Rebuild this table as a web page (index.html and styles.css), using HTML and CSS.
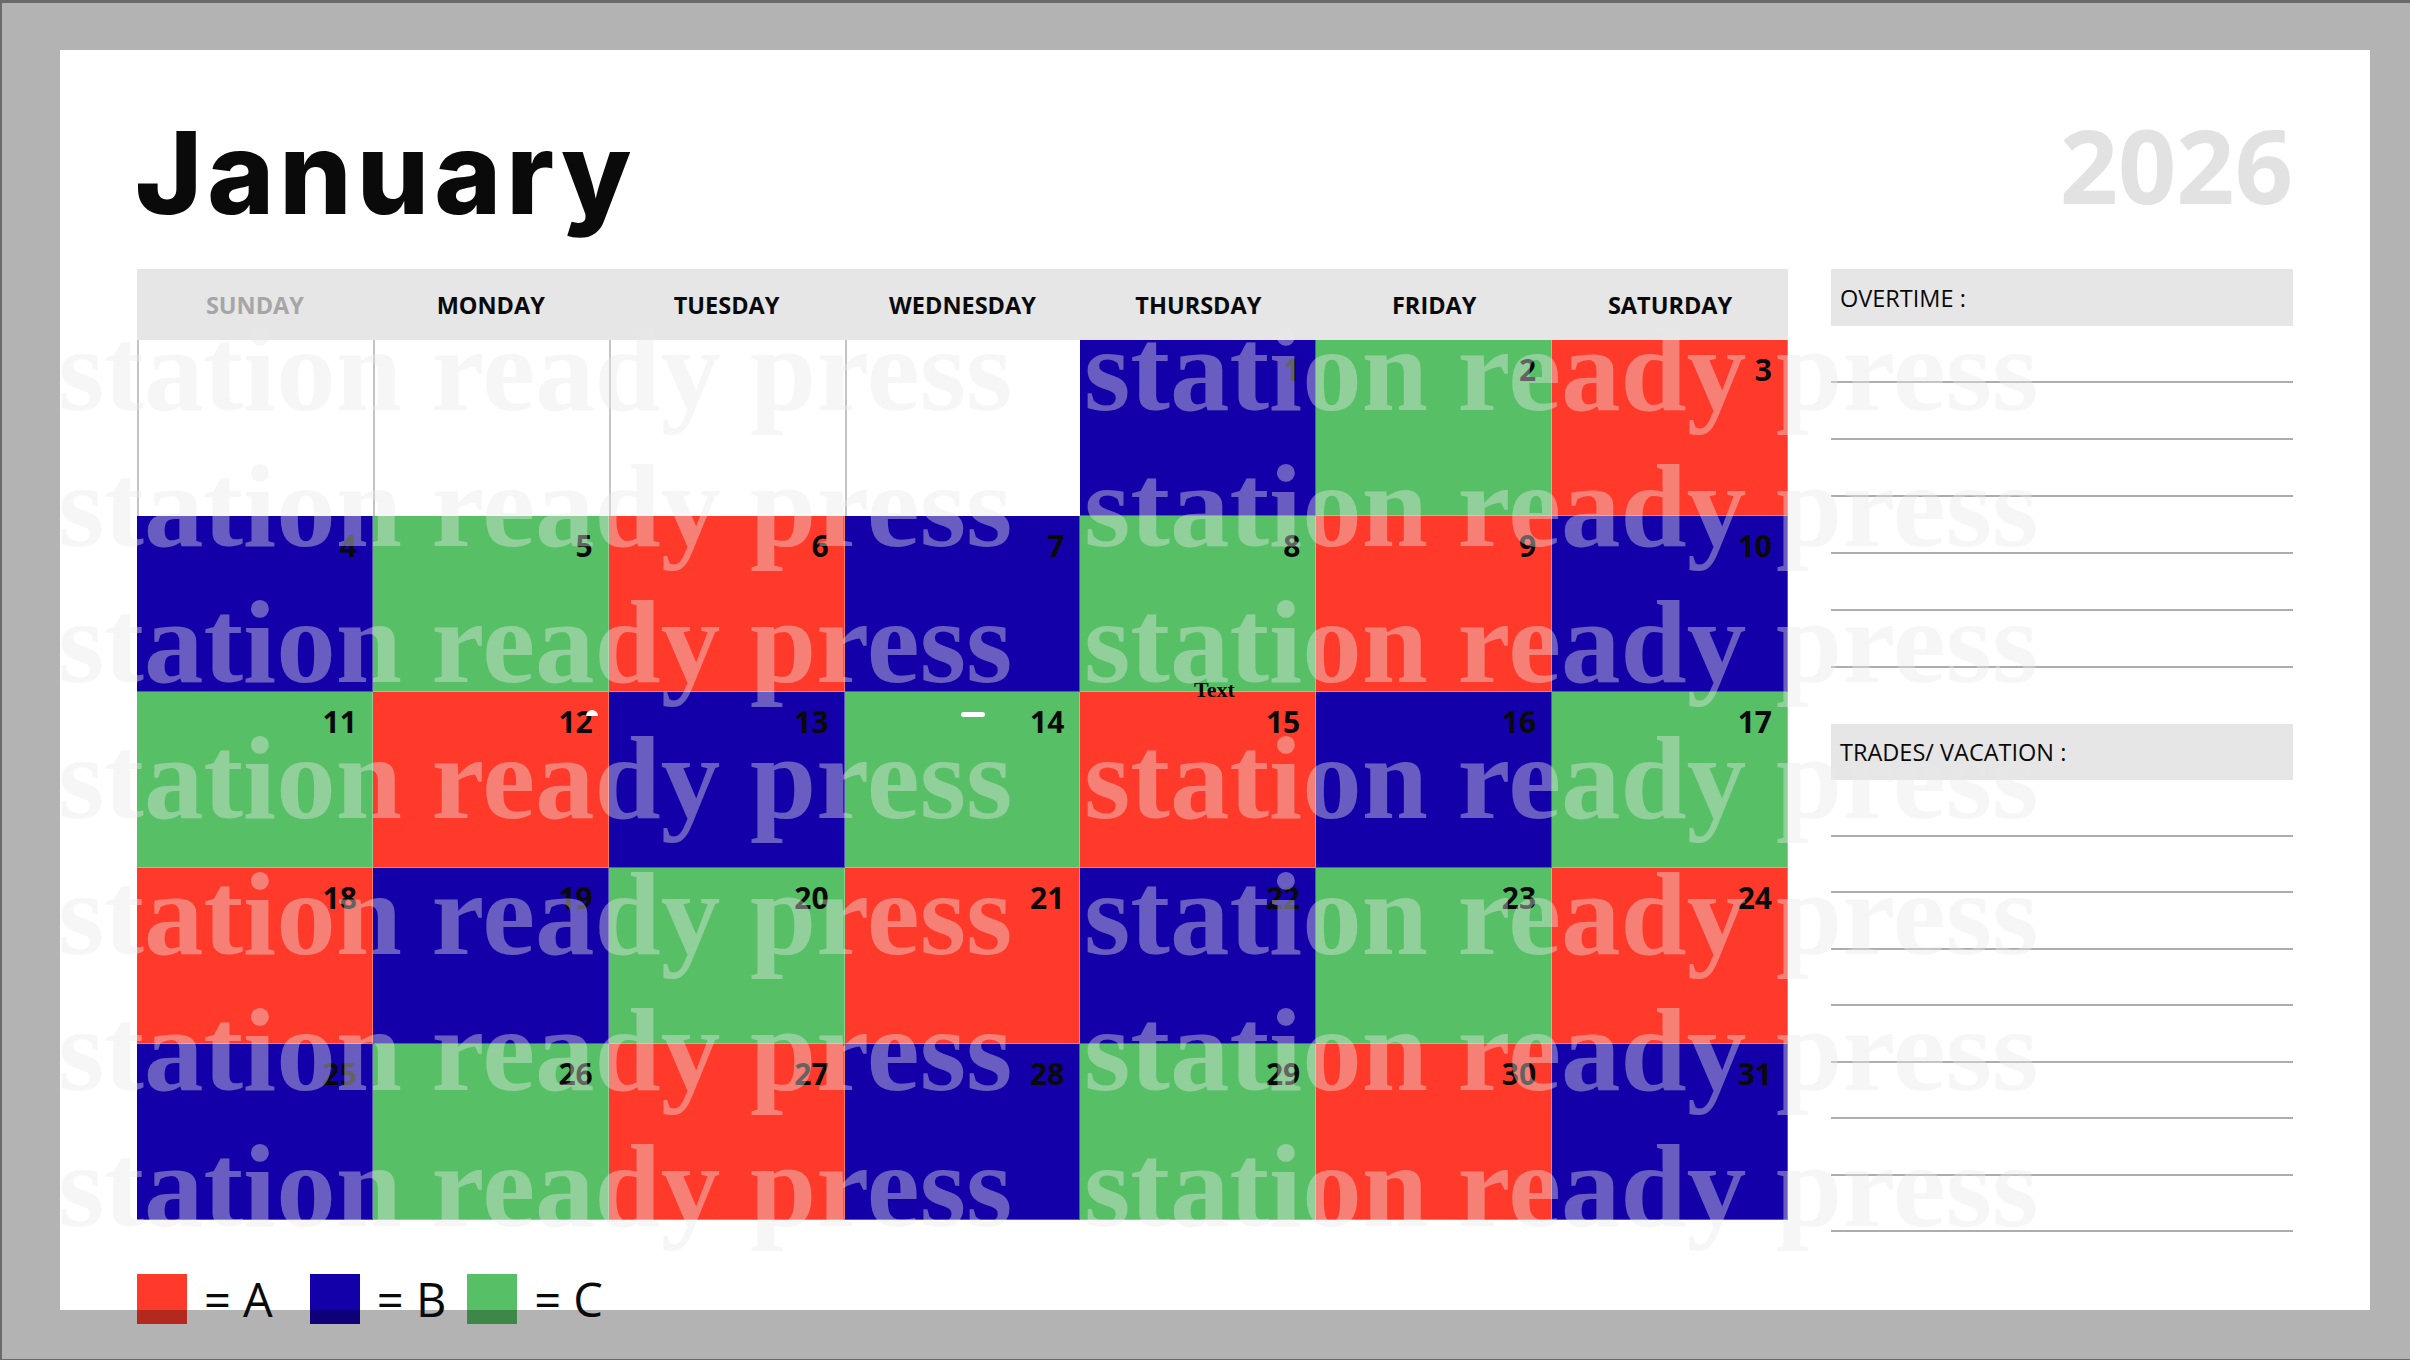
FILE: index.html
```html
<!DOCTYPE html>
<html lang="en">
<head>
<meta charset="utf-8">
<title>January 2026</title>
<link rel="stylesheet" href="styles.css">
</head>
<body>
<div class="page">
  <div class="card">
    <header class="title-row">
      <h1 class="month">January</h1>
      <div class="year">2026</div>
    </header>
    <div class="main">
      <section class="calendar">
        <div class="dow-row">
          <div class="dow sun">SUNDAY</div>
          <div class="dow">MONDAY</div>
          <div class="dow">TUESDAY</div>
          <div class="dow">WEDNESDAY</div>
          <div class="dow">THURSDAY</div>
          <div class="dow">FRIDAY</div>
          <div class="dow">SATURDAY</div>
        </div>
        <div class="days">
          <div class="day empty"></div>
          <div class="day empty"></div>
          <div class="day empty"></div>
          <div class="day empty"></div>
          <div class="day b">1</div>
          <div class="day c">2</div>
          <div class="day a">3</div>
          <div class="day b">4</div>
          <div class="day c">5</div>
          <div class="day a">6</div>
          <div class="day b">7</div>
          <div class="day c">8</div>
          <div class="day a">9</div>
          <div class="day b">10</div>
          <div class="day c">11</div>
          <div class="day a">12</div>
          <div class="day b">13</div>
          <div class="day c">14</div>
          <div class="day a">15</div>
          <div class="day b">16</div>
          <div class="day c">17</div>
          <div class="day a">18</div>
          <div class="day b">19</div>
          <div class="day c">20</div>
          <div class="day a">21</div>
          <div class="day b">22</div>
          <div class="day c">23</div>
          <div class="day a">24</div>
          <div class="day b">25</div>
          <div class="day c">26</div>
          <div class="day a">27</div>
          <div class="day b">28</div>
          <div class="day c">29</div>
          <div class="day a">30</div>
          <div class="day b">31</div>
        </div>
      </section>
      <aside class="notes">
        <div class="note-head">OVERTIME :</div>
        <div class="line"></div>
        <div class="line"></div>
        <div class="line"></div>
        <div class="line"></div>
        <div class="line"></div>
        <div class="line"></div>
        <div class="note-head trades">TRADES/ VACATION :</div>
        <div class="line tight"></div>
        <div class="line tight"></div>
        <div class="line tight"></div>
        <div class="line tight"></div>
        <div class="line tight"></div>
        <div class="line tight"></div>
        <div class="line tight"></div>
        <div class="line tight"></div>
      </aside>
    </div>
    <div class="legend">
      <span class="swatch sw-a"></span><span class="legend-label">= A</span>
      <span class="swatch sw-b"></span><span class="legend-label lbl-b">= B</span>
      <span class="swatch sw-c"></span><span class="legend-label">= C</span>
    </div>
  </div>

  <div class="watermark" aria-hidden="true">
    <div class="wm-row"><span>station ready press</span><span>station ready press</span></div>
    <div class="wm-row"><span>station ready press</span><span>station ready press</span></div>
    <div class="wm-row"><span>station ready press</span><span>station ready press</span></div>
    <div class="wm-row"><span>station ready press</span><span>station ready press</span></div>
    <div class="wm-row"><span>station ready press</span><span>station ready press</span></div>
    <div class="wm-row"><span>station ready press</span><span>station ready press</span></div>
    <div class="wm-row"><span>station ready press</span><span>station ready press</span></div>
  </div>
  <span class="stray-text">Text</span>
  <span class="stray-dash"></span>
  <span class="stray-tick"></span>
</div>
</body>
</html>
```

FILE: styles.css
```css
* { box-sizing: border-box; }

html, body {
  margin: 0;
  padding: 0;
}

body {
  background: #b3b3b3;
  font-family: "Open Sans", "Liberation Sans", sans-serif;
  color: #0a0a0a;
}

.page {
  position: relative;
  width: 2410px;
  height: 1360px;
  background: #b3b3b3;
  padding: 50px 0 0 60px;
  box-shadow: inset 0 3px 0 #6a6a6a, inset 2px 0 0 #6a6a6a, inset 0 -1px 0 #6a6a6a;
  overflow: hidden;
}

.card {
  width: 2310px;
  height: 1260px;
  background: #ffffff;
  padding: 0 77px;
}

.title-row {
  height: 219px;
  display: flex;
  justify-content: space-between;
  align-items: flex-start;
}

.month {
  margin: 66px 0 0 -2px;
  font-family: "Inter", "Open Sans", sans-serif;
  font-weight: 800;
  font-size: 114px;
  line-height: 1;
  letter-spacing: 5px;
  color: #0a0a0a;
}

.year {
  margin: 64px 0 0 0;
  font-family: "Open Sans", sans-serif;
  font-weight: 700;
  font-size: 102px;
  line-height: 1;
  color: #e2e2e2;
}

.main {
  display: flex;
  gap: 43px;
  height: 951px;
}

.calendar {
  width: 1651px;
}

.dow-row {
  display: grid;
  grid-template-columns: repeat(7, 1fr);
  height: 71px;
  background: #e6e6e6;
}

.dow {
  display: flex;
  align-items: center;
  justify-content: center;
  font-weight: 700;
  font-size: 23.5px;
  color: #0a0a0a;
}

.dow.sun { color: #a6a6a6; }

.days {
  display: grid;
  grid-template-columns: repeat(7, 1fr);
  grid-template-rows: repeat(5, 176px);
}

.day {
  text-align: right;
  padding: 10px 15px 0 0;
  font-weight: 700;
  font-size: 30px;
  line-height: 1.36;
  color: #0a0a0a;
  border-right: 1px solid rgba(235, 235, 235, 0.35);
  border-bottom: 1px solid rgba(235, 235, 235, 0.35);
}

.day.empty {
  background: #ffffff;
  border-right: 0;
  border-bottom: 0;
  border-left: 2px solid #c4c4c4;
}

.day.a { background: #ff3a2a; }
.day.b { background: #1400a8; }
.day.c { background: #57c066; }

.notes {
  width: 462px;
  display: flex;
  flex-direction: column;
}

.note-head {
  flex: none;
  height: 57px;
  background: #e6e6e6;
  display: flex;
  align-items: center;
  padding-left: 9px;
  font-size: 23.5px;
  font-weight: 400;
  color: #0a0a0a;
}

.note-head.trades {
  height: 56px;
  margin-top: 56px;
}

.line {
  flex: none;
  height: 57px;
  border-bottom: 2px solid #adadad;
}

.line.tight {
  height: 56.5px;
}

.legend {
  margin-top: 54px;
  display: flex;
  align-items: center;
  height: 50px;
}

.swatch {
  width: 50px;
  height: 50px;
  margin-right: 17px;
}

.sw-a { background: linear-gradient(to bottom, #ff3a2a 36px, #b4291e 36px); }
.sw-b { background: linear-gradient(to bottom, #1400a8 36px, #0d0078 36px); }
.sw-c { background: linear-gradient(to bottom, #57c066 36px, #3d8848 36px); }

.legend-label {
  font-size: 47px;
  line-height: 1;
  font-weight: 400;
  color: #0a0a0a;
  margin-right: 37px;
}

.legend-label.lbl-b {
  margin-right: 21px;
}

.watermark {
  position: absolute;
  left: 58px;
  top: 302px;
  pointer-events: none;
  font-family: "Liberation Serif", "Times New Roman", serif;
  font-weight: 700;
  font-size: 119px;
  line-height: 136px;
  color: rgba(232, 232, 232, 0.4);
  white-space: nowrap;
}

.wm-row {
  display: grid;
  grid-template-columns: 1026px 1026px;
}

.stray-text {
  position: absolute;
  left: 1194px;
  top: 679px;
  font-family: "Liberation Serif", "Times New Roman", serif;
  font-weight: 700;
  font-size: 22px;
  line-height: 1;
  color: #0a0a0a;
}

.stray-dash {
  position: absolute;
  left: 961px;
  top: 712px;
  width: 24px;
  height: 5px;
  border-radius: 3px;
  background: #ffffff;
}

.stray-tick {
  position: absolute;
  left: 586px;
  top: 710px;
  width: 12px;
  height: 6px;
  border-radius: 6px 6px 0 0;
  background: #ffffff;
}
```
